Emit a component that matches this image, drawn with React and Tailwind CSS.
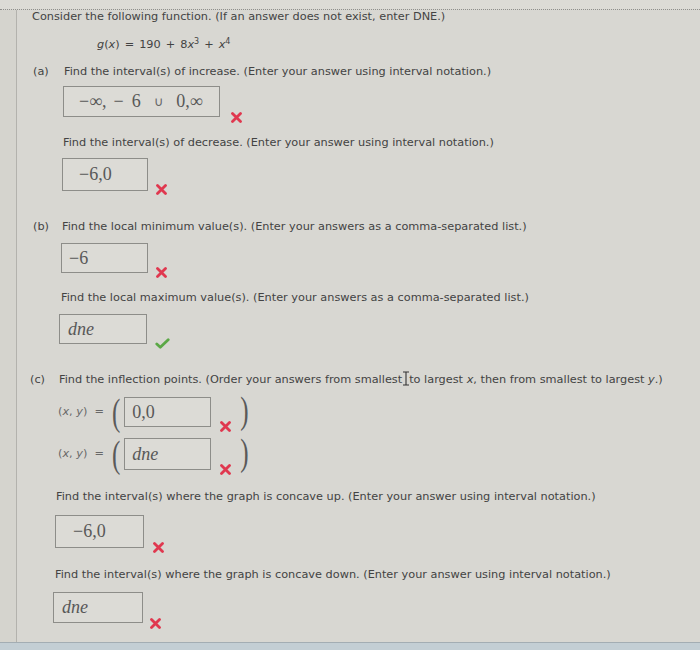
import React from 'react'

const SANS = "font-['DejaVu_Sans',Verdana,sans-serif]"
const SERIF = "font-['Liberation_Serif','Times_New_Roman',serif]"

function XMark({ className = '' }) {
  return (
    <svg width="11" height="11" viewBox="0 0 11 11" className={className}>
      <path d="M1.5 1.5 L9.5 9.5 M9.5 1.5 L1.5 9.5" stroke="#e0384f" strokeWidth="2.8" strokeLinecap="round" />
    </svg>
  )
}

function Check({ className = '' }) {
  return (
    <svg width="15" height="11" viewBox="0 0 15 11" className={className}>
      <path d="M1.8 6 L5.3 9.2 L13.2 1.8" stroke="#5ba846" strokeWidth="2.8" fill="none" strokeLinecap="round" strokeLinejoin="round" />
    </svg>
  )
}

function Box({ w, h, pl, children, italic }) {
  return (
    <div
      className={`${SERIF} ${italic ? 'italic' : ''} flex items-center border border-[#8d8d89] bg-[#dcdbd6] text-[18px] text-[#585858]`}
      style={{ width: w, height: h, paddingLeft: pl }}
    >
      {children}
    </div>
  )
}

function Line({ className = '', children }) {
  return <p className={`text-[11.3px] leading-[14px] whitespace-nowrap ${className}`}>{children}</p>
}

function Paren({ close }) {
  return (
    <span className={`${SERIF} inline-block scale-y-[1.5] text-[25px] leading-[25px] text-[#5a5a5a]`}>
      {close ? ')' : '('}
    </span>
  )
}

function PointRow({ className = '', children, italic, h = 30 }) {
  return (
    <div className={`flex items-center ${className}`}>
      <span className="w-[54px] text-[11.3px] text-[#686868]">
        (<i>x</i>, <i>y</i>) &nbsp;=
      </span>
      <Paren />
      <div className="ml-[4px] flex items-end">
        <Box w={87} h={h} pl={7} italic={italic}>
          {children}
        </Box>
        <XMark className="ml-[9px] translate-y-[5px]" />
      </div>
      <span className="ml-[9px]">
        <Paren close />
      </span>
    </div>
  )
}

export default function App() {
  return (
    <div className={`${SANS} relative h-[650px] w-[700px] overflow-hidden bg-[#d8d7d2] text-[#434343]`}>
      <div className="h-[9px] bg-[#dcdbd6]" />
      <div className="flex h-[633px] border-t border-dotted border-[#8f8f8c]">
        <div className="w-[17px] shrink-0 border-r border-[#b3b2ad] bg-[#d5d4ce]" />
        <div className="flex-1">
          <Line className="mt-[0px] ml-[15px]">
            Consider the following function. (If an answer does not exist, enter DNE.)
          </Line>

          <Line className="mt-[14px] ml-[80px]">
            <i>g</i>(<i>x</i>)<span className="mx-[5px]">=</span>190<span className="mx-[5px]">+</span>8<i>x</i>
            <sup className="text-[8px]">3</sup>
            <span className="mx-[5px]">+</span>
            <i>x</i>
            <sup className="text-[8px]">4</sup>
          </Line>

          {/* (a) */}
          <Line className="mt-[13px] ml-[16px] flex">
            <span className="w-[31px]">(a)</span>
            <span>Find the interval(s) of increase. (Enter your answer using interval notation.)</span>
          </Line>
          <div className="mt-[7px] ml-[46px] flex items-end">
            <Box w={157} h={31} pl={15}>
              <span>−∞,</span>
              <span className="ml-[7px]">−</span>
              <span className="ml-[8px]">6</span>
              <span className={`${SANS} mx-[13px] text-[13px] text-[#666]`}>∪</span>
              <span>0,∞</span>
            </Box>
            <XMark className="ml-[11px] translate-y-[6px]" />
          </div>

          <Line className="mt-[19px] ml-[46px]">
            Find the interval(s) of decrease. (Enter your answer using interval notation.)
          </Line>
          <div className="mt-[8px] ml-[45px] flex items-end">
            <Box w={86} h={33} pl={16}>
              −6,0
            </Box>
            <XMark className="ml-[8px] translate-y-[4px]" />
          </div>

          {/* (b) */}
          <Line className="mt-[29px] ml-[16px] flex">
            <span className="w-[29px]">(b)</span>
            <span>Find the local minimum value(s). (Enter your answers as a comma-separated list.)</span>
          </Line>
          <div className="mt-[9px] ml-[44px] flex items-end">
            <Box w={87} h={30} pl={7}>
              −6
            </Box>
            <XMark className="ml-[8px] translate-y-[5px]" />
          </div>

          <Line className="mt-[18px] ml-[44px]">
            Find the local maximum value(s). (Enter your answers as a comma-separated list.)
          </Line>
          <div className="mt-[9px] ml-[42px] flex items-end">
            <Box w={88} h={30} pl={8} italic>
              dne
            </Box>
            <Check className="ml-[8px] translate-y-[5px]" />
          </div>

          {/* (c) */}
          <Line className="mt-[29px] ml-[13px] flex">
            <span className="w-[29px]">(c)</span>
            <span>
              Find the inflection points. (Order your answers from smallest
              <span className="relative inline-block w-[7px] align-middle">
                <svg width="8" height="15" viewBox="0 0 8 15" className="-mt-[3px]">
                  <path d="M1 1 H7 M4 1 V14 M1 14 H7" stroke="#333" strokeWidth="1.1" fill="none" />
                </svg>
              </span>
              to largest <i>x</i>, then from smallest to largest <i>y</i>.)
            </span>
          </Line>

          <PointRow className="mt-[10px] ml-[41px]">0,0</PointRow>
          <PointRow className="mt-[11px] ml-[41px]" italic h={32}>
            dne
          </PointRow>

          <Line className="mt-[20px] ml-[39px]">
            Find the interval(s) where the graph is concave up. (Enter your answer using interval notation.)
          </Line>
          <div className="mt-[11px] ml-[38px] flex items-end">
            <Box w={89} h={33} pl={17}>
              −6,0
            </Box>
            <XMark className="ml-[9px] translate-y-[5px]" />
          </div>

          <Line className="mt-[20px] ml-[38px]">
            Find the interval(s) where the graph is concave down. (Enter your answer using interval notation.)
          </Line>
          <div className="mt-[10px] ml-[36px] flex items-end">
            <Box w={90} h={31} pl={8} italic>
              dne
            </Box>
            <XMark className="ml-[7px] translate-y-[6px]" />
          </div>
        </div>
      </div>
      <div className="h-[8px] border-t border-[#a3adb3] bg-[#c3ced4]" />
    </div>
  )
}
